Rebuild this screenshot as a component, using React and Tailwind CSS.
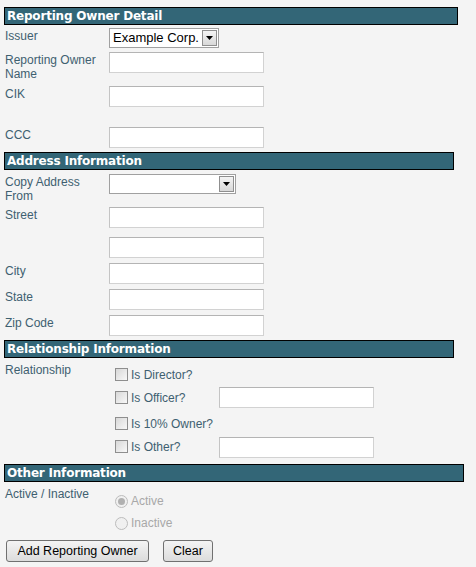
import React from 'react';

const LABEL = 'text-[12px] leading-[14px] text-[#3e6070]';

function SectionHeader({ title, width, className = '' }) {
  return (
    <div
      className={`h-[18px] border border-black bg-[#336677] pl-[2px] text-[12px] font-bold leading-[16px] tracking-[-0.2px] text-white ${className}`}
      style={{ width, fontFamily: '"DejaVu Sans", Verdana, sans-serif' }}
    >
      {title}
    </div>
  );
}

function TextBox({ className = '' }) {
  return (
    <div
      className={`h-[21px] w-[155px] shrink-0 border border-[#d2d2d2] border-t-[#b4b4b4] border-l-[#c4c4c4] bg-white ${className}`}
    />
  );
}

function Arrow() {
  return (
    <div className="flex h-[16px] w-[15px] items-center justify-center border border-[#8f8f8f] bg-gradient-to-b from-[#f4f4f4] to-[#d8d8d8]">
      <svg width="7" height="4" viewBox="0 0 7 4">
        <path d="M0 0h7L3.5 4z" fill="#000" />
      </svg>
    </div>
  );
}

function Select({ value, width }) {
  return (
    <div
      className="flex h-[20px] items-center justify-between border border-[#a0a0a0] bg-white pl-[3px] pr-[1px]"
      style={{ width }}
    >
      <span className="text-[13px] leading-[16px] text-black">{value}</span>
      <Arrow />
    </div>
  );
}

function Row({ label, top, children }) {
  return (
    <div className="flex items-start" style={{ marginTop: top }}>
      <div className={`w-[104px] shrink-0 pt-[1px] ${LABEL}`}>{label}</div>
      {children}
    </div>
  );
}

function Box() {
  return (
    <span className="h-[13px] w-[13px] shrink-0 border border-[#8e8e8e] bg-gradient-to-br from-[#d8d8d8] to-[#f8f8f8]" />
  );
}

function Check({ label, className = '' }) {
  return (
    <div className={`flex h-[13px] w-[104px] items-start overflow-visible ${className}`}>
      <Box />
      <span className="ml-[3px] whitespace-nowrap pt-[1px] text-[12px] leading-[13px] text-[#3e6070]">{label}</span>
    </div>
  );
}

function Radio({ label, checked, className = '' }) {
  return (
    <div className={`flex h-[13px] items-center ${className}`}>
      <span className="flex h-[13px] w-[13px] items-center justify-center rounded-full border border-[#bcbcbc] bg-[#f0f0f0]">
        {checked && <span className="h-[7px] w-[7px] rounded-full bg-[#b0b0b0]" />}
      </span>
      <span className="ml-[3px] text-[12px] leading-[15px] text-[#a8a8a8]">{label}</span>
    </div>
  );
}

function Button({ children, width }) {
  return (
    <div
      className="flex h-[22px] items-center justify-center rounded-[3px] border border-[#707070] bg-gradient-to-b from-[#f4f4f4] to-[#dcdcdc] text-[12.5px] text-black"
      style={{ width }}
    >
      {children}
    </div>
  );
}

export default function App() {
  return (
    <div
      className="h-[567px] w-[476px] overflow-hidden bg-[#f4f4f4] pl-[4px] pt-[7px]"
      style={{ fontFamily: '"Liberation Sans", Arial, sans-serif' }}
    >
      {/* Reporting Owner Detail */}
      <SectionHeader title="Reporting Owner Detail" width={454} />
      <div className="pl-[1px]">
        <Row label="Issuer" top={3}>
          <Select value="Example Corp." width={110} />
        </Row>
        <Row label={<>Reporting Owner<br />Name</>} top={4}>
          <TextBox />
        </Row>
        <Row label="CIK" top={5}>
          <TextBox />
        </Row>
        <Row label="CCC" top={20}>
          <TextBox />
        </Row>
      </div>

      {/* Address Information */}
      <SectionHeader title="Address Information" width={450} className="mt-[4px]" />
      <div className="pl-[1px]">
        <Row label={<>Copy Address<br />From</>} top={4}>
          <Select value="" width={127} />
        </Row>
        <Row label="Street" top={4}>
          <TextBox />
        </Row>
        <Row label="" top={9}>
          <TextBox />
        </Row>
        <Row label="City" top={5}>
          <TextBox />
        </Row>
        <Row label="State" top={5}>
          <TextBox />
        </Row>
        <Row label="Zip Code" top={5}>
          <TextBox />
        </Row>
      </div>

      {/* Relationship Information */}
      <SectionHeader title="Relationship Information" width={450} className="mt-[4px]" />
      <div className="flex items-start pl-[1px]">
        <div className={`w-[110px] shrink-0 pt-[5px] ${LABEL}`}>Relationship</div>
        <div className="flex flex-col pt-[10px]">
          <Check label="Is Director?" />
          <div className="mt-[6px] flex items-start">
            <Check label="Is Officer?" className="mt-[4px]" />
            <TextBox />
          </div>
          <Check label="Is 10% Owner?" className="mt-[9px]" />
          <div className="mt-[7px] flex items-start">
            <Check label="Is Other?" className="mt-[3px]" />
            <TextBox />
          </div>
        </div>
      </div>

      {/* Other Information */}
      <SectionHeader title="Other Information" width={460} className="mt-[6px]" />
      <div className="flex items-start pl-[1px]">
        <div className={`w-[110px] shrink-0 pt-[5px] ${LABEL}`}>Active / Inactive</div>
        <div className="flex flex-col pt-[13px]">
          <Radio label="Active" checked />
          <Radio label="Inactive" className="mt-[9px]" />
        </div>
      </div>

      <div className="mt-[10px] flex gap-[14px] pl-[2px]">
        <Button width={143}>Add Reporting Owner</Button>
        <Button width={50}>Clear</Button>
      </div>
    </div>
  );
}
